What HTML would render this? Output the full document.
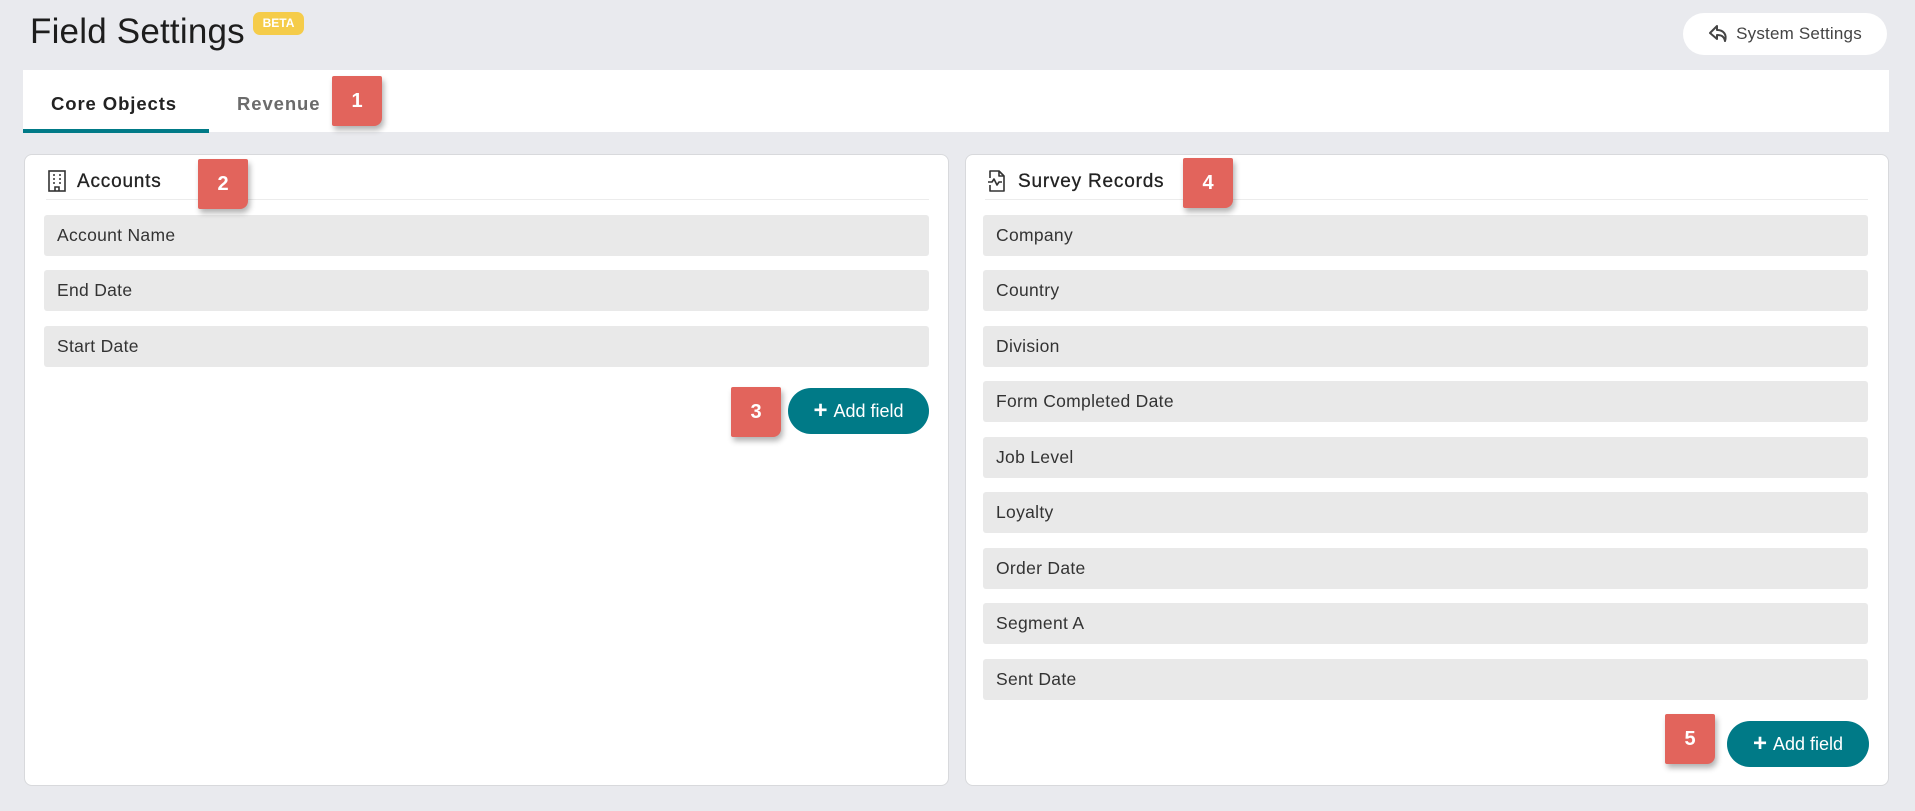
<!DOCTYPE html>
<html><head><meta charset="utf-8"><style>
*{box-sizing:border-box;margin:0;padding:0}
body{width:1915px;height:811px;background:#e9eaee;font-family:"Liberation Sans",Arial,sans-serif;position:relative;overflow:hidden;color:#2b2b2b}
.abs{position:absolute}
.title{left:30px;top:12px;font-size:35px;color:#1d1d1d;letter-spacing:0.2px}
.beta{left:253px;top:12px;width:51px;height:23px;background:#f5cc4a;border-radius:7px;color:#fff;font-size:12px;font-weight:bold;text-align:center;line-height:23px}
.sys{left:1683px;top:13px;width:204px;height:42px;background:#fff;border-radius:21px;font-size:17px;color:#444;display:flex;align-items:center;justify-content:center;gap:6px;letter-spacing:0.2px}
.tabs{left:23px;top:70px;width:1866px;height:62px;background:#fff}
.tab{top:0;height:62px;line-height:68px;font-size:18.5px;font-weight:bold;letter-spacing:0.9px}
.ul{left:0;top:59px;width:186px;height:4px;background:#007a87}
.card{background:#fff;border:1px solid #d8d9dc;border-radius:8px;top:154px;height:632px}
.hd{font-size:19px;color:#222;top:171px;letter-spacing:0.8px;-webkit-text-stroke:0.3px #222}
.div{height:1px;background:#ececec;top:199px}
.row{height:41px;background:#e9e9e9;border-radius:3px;font-size:17.5px;line-height:41px;padding-left:13px;color:#333;letter-spacing:0.3px}
.btn{background:#007a87;color:#fff;border-radius:23px;height:46px;font-size:18px;display:flex;align-items:center;justify-content:center;gap:6px}
.badge{z-index:5;background:#e2645c;color:#fff;font-weight:bold;font-size:20px;width:50px;height:50px;display:flex;align-items:center;justify-content:center;border-radius:2px 2px 8px 2px;box-shadow:2px 4px 6px rgba(0,0,0,0.3)}
</style></head><body>
<div class="abs title">Field Settings</div>
<div class="abs beta">BETA</div>
<div class="abs sys"><svg width="22" height="20" viewBox="0 0 22 20" fill="none" stroke="#444" stroke-width="2" stroke-linejoin="round"><path d="M9 2 L2 9 L9 15 L9 11 C13 11 16 12 17 17 C19 11 16 6 9 6 Z"/></svg>System Settings</div>
<div class="abs tabs">
 <div class="abs tab" style="left:28px;color:#222">Core Objects</div>
 <div class="abs tab" style="left:214px;color:#6b6b6b">Revenue</div>
 <div class="abs ul"></div>
</div>
<div class="abs badge" style="left:332px;top:76px">1</div>

<div class="abs card" style="left:24px;width:925px"></div>
<svg class="abs" style="left:47px;top:170px" width="20" height="22" viewBox="0 0 20 22" fill="none" stroke="#333" stroke-width="1.6"><rect x="2" y="1" width="16" height="20"/><path d="M6 5h2M12 5h2M6 9h2M12 9h2M6 13h2M12 13h2M8 21v-4h4v4"/></svg>
<div class="abs hd" style="left:77px">Accounts</div>
<div class="abs div" style="left:46px;width:883px"></div>
<div class="abs badge" style="left:198px;top:159px">2</div>
<div class="abs row" style="left:44px;top:215px;width:885px">Account Name</div>
<div class="abs row" style="left:44px;top:270px;width:885px">End Date</div>
<div class="abs row" style="left:44px;top:326px;width:885px">Start Date</div>
<div class="abs badge" style="left:731px;top:387px">3</div>
<div class="abs btn" style="left:788px;top:388px;width:141px"><span style="font-size:24px;font-weight:bold;line-height:1">+</span>Add field</div>

<div class="abs card" style="left:965px;width:924px"></div>
<svg class="abs" style="left:987px;top:169px" width="20" height="24" viewBox="0 0 20 24" fill="none" stroke="#333" stroke-width="1.6" stroke-linejoin="round"><path d="M3 9V2h9l5 5v15H3v-6"/><path d="M12 2v5h5"/><path d="M1 13h4l2-3 3 6 2-3h3"/></svg>
<div class="abs hd" style="left:1018px">Survey Records</div>
<div class="abs div" style="left:985px;width:883px"></div>
<div class="abs badge" style="left:1183px;top:158px">4</div>
<div class="abs row" style="left:983px;top:215px;width:885px">Company</div>
<div class="abs row" style="left:983px;top:270px;width:885px">Country</div>
<div class="abs row" style="left:983px;top:326px;width:885px">Division</div>
<div class="abs row" style="left:983px;top:381px;width:885px">Form Completed Date</div>
<div class="abs row" style="left:983px;top:437px;width:885px">Job Level</div>
<div class="abs row" style="left:983px;top:492px;width:885px">Loyalty</div>
<div class="abs row" style="left:983px;top:548px;width:885px">Order Date</div>
<div class="abs row" style="left:983px;top:603px;width:885px">Segment A</div>
<div class="abs row" style="left:983px;top:659px;width:885px">Sent Date</div>
<div class="abs badge" style="left:1665px;top:714px">5</div>
<div class="abs btn" style="left:1727px;top:721px;width:142px"><span style="font-size:24px;font-weight:bold;line-height:1">+</span>Add field</div>
</body></html>
